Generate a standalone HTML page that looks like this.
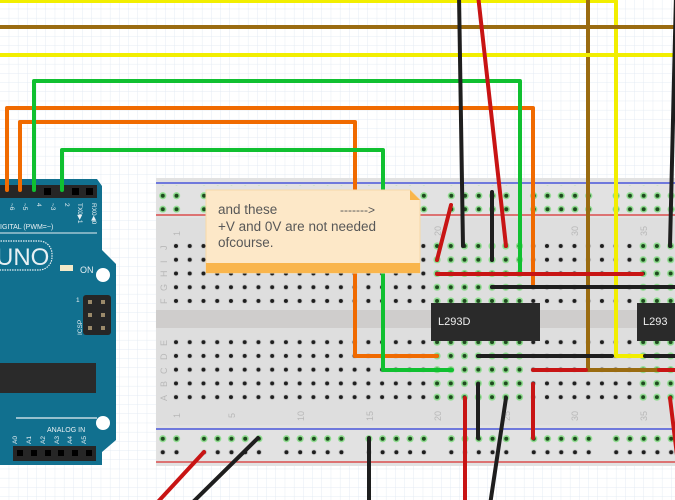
<!DOCTYPE html>
<html><head><meta charset="utf-8"><style>
html,body{margin:0;padding:0;background:#fff;}
svg{display:block}
text{font-family:"Liberation Sans",sans-serif}
</style></head><body>
<svg width="675" height="500" viewBox="0 0 675 500" xmlns="http://www.w3.org/2000/svg">
<defs>
<pattern id="grid" width="9.2" height="9.2" patternUnits="userSpaceOnUse">
<path d="M9.2 0V9.2H0" fill="none" stroke="#e4ebf3" stroke-width="1"/>
</pattern>
<pattern id="holes" x="169.13" y="239.13" width="13.74" height="13.74" patternUnits="userSpaceOnUse">
<circle cx="6.87" cy="6.87" r="3" fill="#cfcfcf"/>
<circle cx="6.87" cy="6.87" r="2" fill="#1e1e1e"/>
</pattern>
<pattern id="gholes" x="169.13" y="239.13" width="13.74" height="13.74" patternUnits="userSpaceOnUse">
<circle cx="6.87" cy="6.87" r="3.6" fill="#8fdc8f"/>
<circle cx="6.87" cy="6.87" r="2" fill="#1e4a1e"/>
</pattern>
<pattern id="rail" x="197.13" y="0" width="82.44" height="13.5" patternUnits="userSpaceOnUse">
<g fill="#8fdc8f"><circle cx="6.87" cy="6.75" r="3.6"/><circle cx="20.61" cy="6.75" r="3.6"/><circle cx="34.35" cy="6.75" r="3.6"/><circle cx="48.09" cy="6.75" r="3.6"/><circle cx="61.83" cy="6.75" r="3.6"/></g>
<g fill="#1e4a1e"><circle cx="6.87" cy="6.75" r="2"/><circle cx="20.61" cy="6.75" r="2"/><circle cx="34.35" cy="6.75" r="2"/><circle cx="48.09" cy="6.75" r="2"/><circle cx="61.83" cy="6.75" r="2"/></g>
</pattern>
<pattern id="railb" x="197.13" y="0" width="82.44" height="13.5" patternUnits="userSpaceOnUse">
<g fill="#cfcfcf"><circle cx="6.87" cy="6.75" r="3"/><circle cx="20.61" cy="6.75" r="3"/><circle cx="34.35" cy="6.75" r="3"/><circle cx="48.09" cy="6.75" r="3"/><circle cx="61.83" cy="6.75" r="3"/></g>
<g fill="#1e1e1e"><circle cx="6.87" cy="6.75" r="2"/><circle cx="20.61" cy="6.75" r="2"/><circle cx="34.35" cy="6.75" r="2"/><circle cx="48.09" cy="6.75" r="2"/><circle cx="61.83" cy="6.75" r="2"/></g>
</pattern>
</defs>
<rect width="675" height="500" fill="#fff"/>
<rect width="675" height="500" fill="url(#grid)"/>

<!-- breadboard -->
<rect x="156" y="178" width="530" height="288" fill="#dcdcdc"/>
<rect x="156" y="178" width="530" height="40" fill="#e2e2e2"/>
<rect x="156" y="425" width="530" height="41" fill="#e2e2e2"/>
<rect x="156" y="218" width="530" height="207" fill="#dedede"/>
<rect x="156" y="310" width="530" height="18" fill="#cfcdcc"/>
<line x1="156" y1="183" x2="686" y2="183" stroke="#2b3bd8" stroke-width="1.2"/>
<line x1="156" y1="215" x2="686" y2="215" stroke="#d83030" stroke-width="1.2"/>
<line x1="156" y1="429" x2="686" y2="429" stroke="#2b3bd8" stroke-width="1.2"/>
<line x1="156" y1="462" x2="686" y2="462" stroke="#d83030" stroke-width="1.2"/>
<rect x="156" y="185.5" width="530" height="27" fill="url(#rail)"/>
<rect x="156" y="431.5" width="530" height="13.5" fill="url(#rail)"/>
<rect x="156" y="445" width="530" height="13.5" fill="url(#railb)"/>
<rect x="169" y="239" width="517" height="69" fill="url(#holes)"/>
<rect x="169" y="336" width="517" height="69" fill="url(#holes)"/>
<!-- green highlighted regions -->
<rect x="430" y="239" width="97" height="69" fill="url(#gholes)"/>
<rect x="430" y="336" width="97" height="69" fill="url(#gholes)"/>
<rect x="636" y="239" width="40" height="69" fill="url(#gholes)"/>
<rect x="636" y="336" width="40" height="69" fill="url(#gholes)"/>
<g fill="#b8b8b8" font-size="9">
<text transform="translate(180,236) rotate(-90)">1</text>
<text transform="translate(180,418) rotate(-90)">1</text>
<text transform="translate(235,418) rotate(-90)">5</text>
<text transform="translate(304,421) rotate(-90)">10</text>
<text transform="translate(373,421) rotate(-90)">15</text>
<text transform="translate(441,236) rotate(-90)">20</text>
<text transform="translate(441,421) rotate(-90)">20</text>
<text transform="translate(510,421) rotate(-90)">25</text>
<text transform="translate(578,236) rotate(-90)">30</text>
<text transform="translate(578,421) rotate(-90)">30</text>
<text transform="translate(647,236) rotate(-90)">35</text>
<text transform="translate(647,421) rotate(-90)">35</text>
<text transform="translate(167,250) rotate(-90)">J</text>
<text transform="translate(167,263) rotate(-90)">I</text>
<text transform="translate(167,277) rotate(-90)">H</text>
<text transform="translate(167,291) rotate(-90)">G</text>
<text transform="translate(167,304) rotate(-90)">F</text>
<text transform="translate(167,346) rotate(-90)">E</text>
<text transform="translate(167,360) rotate(-90)">D</text>
<text transform="translate(167,374) rotate(-90)">C</text>
<text transform="translate(167,387) rotate(-90)">B</text>
<text transform="translate(167,401) rotate(-90)">A</text>
</g>

<!-- chips -->
<rect x="431" y="303" width="109" height="38" fill="#2a2a2a"/>
<text x="438" y="325" fill="#eee" font-family="Liberation Mono,monospace" font-size="11">L293D</text>
<rect x="637" y="303" width="45" height="38" fill="#2a2a2a"/>
<text x="643" y="325" fill="#eee" font-family="Liberation Mono,monospace" font-size="11">L293</text>

<!-- arduino -->
<path d="M0 179 H97 L102 186 V250 L116 264 V440 L102 452 V465 H0 Z" fill="#11708f"/>
<rect x="0" y="185" width="97" height="13" fill="#262626"/>
<g fill="#000"><rect x="44" y="188" width="7" height="7"/><rect x="72" y="188" width="7" height="7"/><rect x="86" y="188" width="7" height="7"/></g>
<g fill="#e8f0f3" font-family="Liberation Mono,monospace" font-size="7">
<text x="0" y="229">IGITAL (PWM=~)</text>
<text x="80" y="273" font-size="9">ON</text>
<text x="47" y="432">ANALOG IN</text>
</g>
<g fill="#e8f0f3" font-family="Liberation Mono,monospace" font-size="6.5">
<text transform="translate(10,203) rotate(90)">~6</text>
<text transform="translate(23,203) rotate(90)">~5</text>
<text transform="translate(37,203) rotate(90)">4</text>
<text transform="translate(51,203) rotate(90)">~3</text>
<text transform="translate(65,203) rotate(90)">2</text>
<text transform="translate(78,203) rotate(90)">TX0▶1</text>
<text transform="translate(92,203) rotate(90)">RX0◀0</text>
<text transform="translate(82,335) rotate(-90)">ICSP</text>
<text x="76" y="302">1</text>
</g>
<line x1="0" y1="233" x2="97" y2="233" stroke="#e8f0f3" stroke-width="1"/>
<rect x="-20" y="241" width="72" height="29" rx="13" fill="none" stroke="#e8f0f3" stroke-width="1.2" stroke-dasharray="1.5 1"/>
<text x="-4" y="265" fill="#e8f0f3" font-size="24">UNO</text>
<rect x="60" y="265" width="13" height="6" fill="#f3e9c8"/>
<circle cx="103" cy="275" r="7" fill="#fff"/>
<circle cx="103" cy="423" r="7" fill="#fff"/>
<rect x="83" y="295" width="28" height="40" rx="3" fill="#262626"/>
<g fill="#9b8a6a"><rect x="88" y="300" width="4" height="4"/><rect x="101" y="300" width="4" height="4"/><rect x="88" y="313" width="4" height="4"/><rect x="101" y="313" width="4" height="4"/><rect x="88" y="326" width="4" height="4"/><rect x="101" y="326" width="4" height="4"/></g>
<rect x="0" y="363" width="96" height="30" fill="#2a2a2a"/>
<line x1="16" y1="418" x2="97" y2="418" stroke="#e8f0f3" stroke-width="1.2"/>
<g fill="#e8f0f3" font-family="Liberation Mono,monospace" font-size="6.5">
<text transform="translate(17,444) rotate(-90)">A0</text>
<text transform="translate(31,444) rotate(-90)">A1</text>
<text transform="translate(45,444) rotate(-90)">A2</text>
<text transform="translate(59,444) rotate(-90)">A3</text>
<text transform="translate(72,444) rotate(-90)">A4</text>
<text transform="translate(86,444) rotate(-90)">A5</text>
</g>
<rect x="13" y="446" width="83" height="15" fill="#262626"/>
<g fill="#000"><rect x="17" y="450" width="6" height="6"/><rect x="31" y="450" width="6" height="6"/><rect x="45" y="450" width="6" height="6"/><rect x="58" y="450" width="6" height="6"/><rect x="72" y="450" width="6" height="6"/><rect x="86" y="450" width="6" height="6"/></g>

<!-- wires -->
<g fill="none" stroke-width="4" stroke-linecap="round" stroke-linejoin="round">
<path d="M-5 1 H616 V356 H643" stroke="#f2ee00"/>
<path d="M-5 27 H690" stroke="#9a6b10"/>
<path d="M588 -5 V370 H657" stroke="#9a6b10"/>
<path d="M-5 55 H690" stroke="#f2ee00"/>
<path d="M7 190 V108 H533 V287" stroke="#f06a00"/>
<path d="M20 190 V122 H355 V356 H437" stroke="#f06a00"/>
<path d="M34 190 V81 H520 V274" stroke="#10c030"/>
<path d="M62 190 V150 H383 V370 H452" stroke="#10c030"/>
<path d="M459 -5 L463 246" stroke="#1e1e1e"/>
<path d="M478 -5 L506 246" stroke="#c81414"/>
<path d="M437 260 L451 205" stroke="#c81414"/>
<path d="M492 192 V260" stroke="#1e1e1e"/>
<path d="M437 274 H642" stroke="#c81414"/>
<path d="M492 287 H690" stroke="#1e1e1e"/>
<path d="M478 356 H612" stroke="#1e1e1e"/>
<path d="M645 356 H690" stroke="#1e1e1e"/>
<path d="M533 370 H586" stroke="#c81414"/>
<path d="M659 370 H690" stroke="#c81414"/>
<path d="M478 384 V438" stroke="#1e1e1e"/>
<path d="M533 384 V438" stroke="#c81414"/>
<path d="M465 398 V505" stroke="#c81414"/>
<path d="M506 398 L490 505" stroke="#1e1e1e"/>
<path d="M369 438 V505" stroke="#1e1e1e"/>
<path d="M204 452 L155 505" stroke="#c81414"/>
<path d="M258 438 L190 505" stroke="#1e1e1e"/>
<path d="M676 -5 L670 246" stroke="#1e1e1e"/>
<path d="M670 398 L680 480" stroke="#c81414"/>
</g>

<!-- note -->
<path d="M206 190 H410 L420 200 V273 H206 Z" fill="#fde8c8" stroke="#f6d9a8" stroke-width="1"/>
<path d="M410 190 V200 H420 Z" fill="#f9b54c"/>
<rect x="206" y="263" width="214" height="10" fill="#f9b54c"/>
<g fill="#585858" font-size="13.5">
<text x="218" y="214">and these</text>
<text x="340" y="214" font-size="12">-------&gt;</text>
<text x="218" y="231">+V and 0V are not needed</text>
<text x="218" y="247">ofcourse.</text>
</g>
</svg>
</body></html>
